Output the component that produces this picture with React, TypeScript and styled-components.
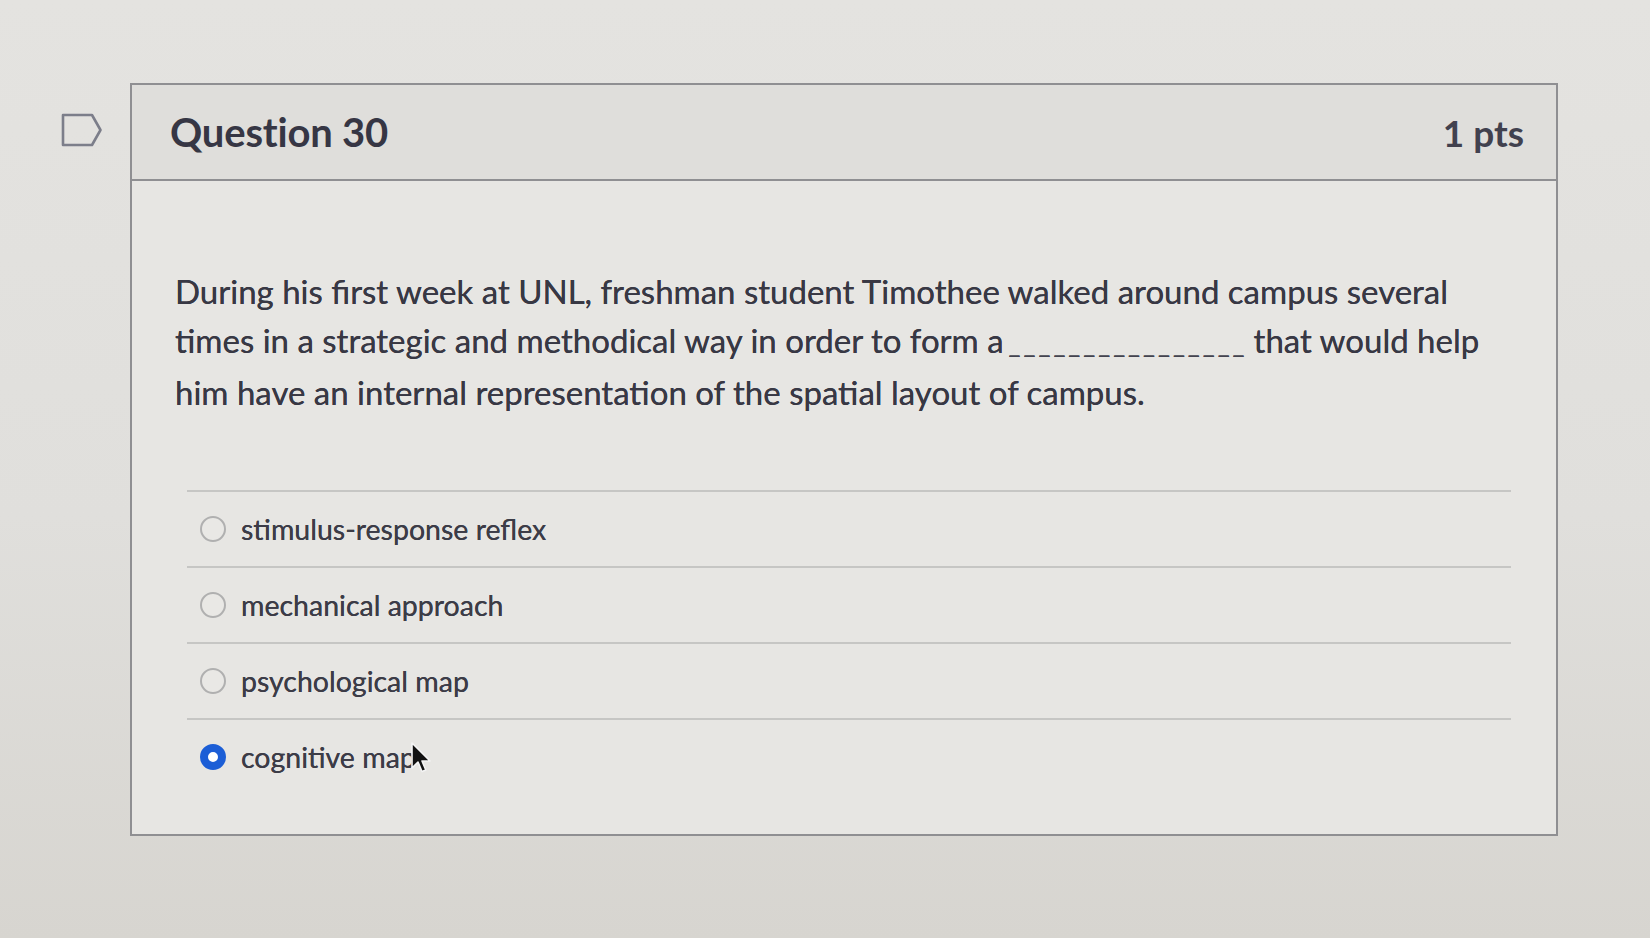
import React from "react";
import styled, { createGlobalStyle } from "styled-components";

const GlobalStyle = createGlobalStyle`
  html, body {
    margin: 0;
    padding: 0;
    width: 1650px;
    height: 938px;
    overflow: hidden;
  }
  body {
    font-family: Lato, "Open Sans", "Liberation Sans", sans-serif;
    background: linear-gradient(180deg, #e4e3e0 0%, #e0dfdc 55%, #d7d5d0 100%);
  }
`;

const Page = styled.div`
  display: flex;
  align-items: flex-start;
  padding: 83px 0 0 61px;
  height: 938px;
  box-sizing: border-box;
`;

const FlagButton = styled.div`
  width: 42px;
  height: 34px;
  margin-top: 30px;
  margin-right: 27px;
  display: flex;
  color: #7c7e8a;
`;

const Card = styled.section`
  width: 1428px;
  border: 2px solid #8f8f92;
  background: #e7e6e3;
  box-sizing: border-box;
`;

const Header = styled.header`
  height: 94px;
  display: flex;
  align-items: center;
  justify-content: space-between;
  padding: 0 32px 0 38px;
  background: #dfdedb;
  border-bottom: 2px solid #8f8f92;
`;

const Title = styled.h2`
  margin: 0;
  font-size: 40px;
  font-weight: 700;
  color: #363644;
  letter-spacing: -0.2px;
`;

const Points = styled.span`
  font-size: 37px;
  font-weight: 700;
  color: #41414e;
`;

const Body = styled.div`
  padding: 86px 45px 40px 43px;
`;

const QuestionText = styled.p`
  margin: 0 0 73px;
  font-size: 33px;
  line-height: 49px;
  color: #383844;
  text-shadow: 0 0 0.4px #383844;
`;

const Blank = styled.span`
  font-size: 26px;
  letter-spacing: 3px;
  color: #444450;
  margin: 0 6px 0 5px;
`;

const AnswerList = styled.ul`
  list-style: none;
  margin: 0 0 0 12px;
  padding: 0;
`;

const AnswerRow = styled.li`
  height: 76px;
  display: flex;
  align-items: center;
  gap: 15px;
  padding-left: 13px;
  border-top: 2px solid #c6c6c4;
  box-sizing: border-box;
`;

const Radio = styled.span<{ $checked?: boolean }>`
  width: 26px;
  height: 26px;
  border-radius: 50%;
  box-sizing: border-box;
  flex: none;
  border: ${(p) => (p.$checked ? "8px solid #1c5ed6" : "2px solid #b0b0b0")};
  background: ${(p) => (p.$checked ? "#ffffff" : "#e9e8e5")};
`;

const Label = styled.span`
  position: relative;
  font-size: 28.5px;
  color: #3c3c47;
  text-shadow: 0 0 0.4px #3c3c47;
`;

const Cursor = styled.span`
  position: absolute;
  right: -16px;
  top: 2px;
  width: 22px;
  height: 32px;
  display: flex;
`;

const answers = [
  { text: "stimulus-response reflex", checked: false },
  { text: "mechanical approach", checked: false },
  { text: "psychological map", checked: false },
  { text: "cognitive map", checked: true },
];

export default function App() {
  return (
    <>
      <GlobalStyle />
      <Page>
        <FlagButton>
          <svg width="42" height="34" viewBox="0 0 42 34" fill="none">
            <path
              d="M2 2 H31 L39.5 17 L31 32 H2 Z"
              stroke="currentColor"
              strokeWidth="2.6"
              strokeLinejoin="round"
            />
          </svg>
        </FlagButton>
        <Card>
          <Header>
            <Title>Question 30</Title>
            <Points>1 pts</Points>
          </Header>
          <Body>
            <QuestionText>
              During his first week at UNL, freshman student Timothee walked around campus several
              <br />
              times in a strategic and methodical way in order to form a
              <Blank>________________</Blank>
              that would help
              <br />
              him have an internal representation of the spatial layout of campus.
            </QuestionText>
            <AnswerList>
              {answers.map((a) => (
                <AnswerRow key={a.text}>
                  <Radio $checked={a.checked} />
                  <Label>
                    {a.text}
                    {a.checked && (
                      <Cursor>
                        <svg width="22" height="32" viewBox="0 0 22 32">
                          <path
                            d="M2 1 L2 26 L8 20 L12 29.5 L15.8 28 L12 19 L20 19 Z"
                            fill="#111"
                            stroke="#f4f4f4"
                            strokeWidth="1.6"
                            strokeLinejoin="round"
                          />
                        </svg>
                      </Cursor>
                    )}
                  </Label>
                </AnswerRow>
              ))}
            </AnswerList>
          </Body>
        </Card>
      </Page>
    </>
  );
}
